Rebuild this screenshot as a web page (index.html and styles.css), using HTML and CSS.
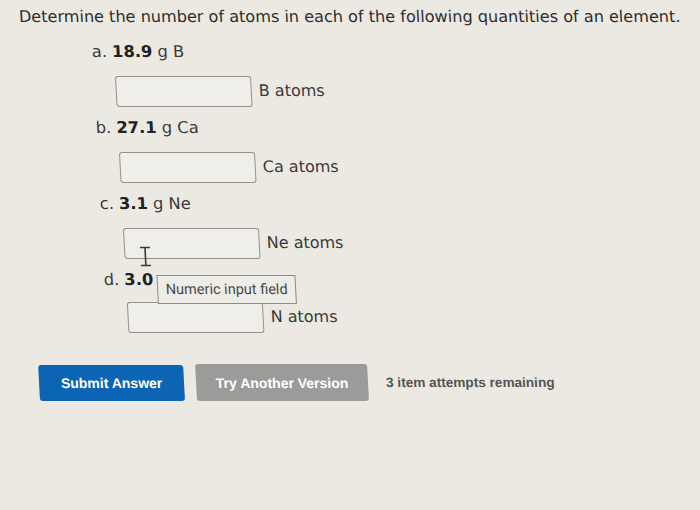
FILE: index.html
```html
<!DOCTYPE html>
<html lang="en">
<head>
<meta charset="utf-8">
<title>Atoms question</title>
<link rel="stylesheet" href="styles.css">
</head>
<body>
<main class="page">
  <p class="prompt">Determine the number of atoms in each of the following quantities of an element.</p>
  <ol class="parts">
    <li class="part">
      <div class="part-label">a. <b>18.9</b> g B</div>
      <div class="answer-row"><span class="field"></span><span class="unit">B atoms</span></div>
    </li>
    <li class="part">
      <div class="part-label">b. <b>27.1</b> g Ca</div>
      <div class="answer-row"><span class="field"></span><span class="unit">Ca atoms</span></div>
    </li>
    <li class="part">
      <div class="part-label">c. <b>3.1</b> g Ne</div>
      <div class="answer-row"><span class="field"></span><span class="unit">Ne atoms</span></div>
      <svg class="ibeam" width="12" height="21" viewBox="0 0 12 21"><path d="M1 1.5h10M6 1.5v18M1 19.5h10" fill="none" stroke="#3a3a3a" stroke-width="1.6"/></svg>
    </li>
    <li class="part part-last">
      <div class="part-label">d. <b>3.0</b></div>
      <div class="answer-row"><span class="field"></span><span class="unit">N atoms</span></div>
      <div class="tooltip">Numeric input field</div>
    </li>
  </ol>
  <div class="actions">
    <button class="btn btn-primary">Submit Answer</button>
    <button class="btn btn-secondary">Try Another Version</button>
    <span class="attempts">3 item attempts remaining</span>
  </div>
</main>
</body>
</html>
```
FILE: styles.css
```css
html, body {
  margin: 0;
  padding: 0;
  background: #ebe9e2;
}
body {
  width: 700px;
  height: 510px;
  overflow: hidden;
  font-family: "DejaVu Sans", Verdana, sans-serif;
  color: #333;
}
.page {
  padding: 7px 0 0 18px;
  transform: skewX(3deg);
  transform-origin: 0 0;
}
.prompt {
  margin: 0;
  font-size: 16.1px;
  line-height: 20px;
  color: #2e2e2e;
}
.parts {
  list-style: none;
  margin: 15px 0 0;
  padding: 0 0 0 71px;
  display: flex;
  flex-direction: column;
  gap: 11px;
}
.part {
  position: relative;
  display: flex;
  flex-direction: column;
  gap: 14px;
}
.part-last {
  gap: 12px;
}
.part-label {
  font-size: 16.3px;
  line-height: 20px;
  color: #3a3a3a;
}
.part-label b {
  color: #222;
}
.answer-row {
  display: flex;
  align-items: center;
  gap: 7px;
  padding-left: 22px;
}
.field {
  width: 136px;
  height: 31px;
  box-sizing: border-box;
  border: 1.5px solid #93918b;
  border-radius: 3px;
  background: #efeee9;
}
.unit {
  font-size: 16px;
  line-height: 20px;
  color: #3a3a3a;
  margin-top: -2px;
}
.tooltip {
  position: absolute;
  left: 53px;
  top: 5px;
  width: 139px;
  height: 29px;
  box-sizing: border-box;
  border: 1px solid #8c8b86;
  background: #edece6;
  font-family: Roboto, "Liberation Sans", sans-serif;
  font-size: 14.5px;
  line-height: 27px;
  text-align: center;
  color: #4a4a4a;
  white-space: nowrap;
}
.ibeam {
  position: absolute;
  left: 37px;
  top: 52px;
}
.actions {
  display: flex;
  align-items: center;
  margin: 31px 0 0 1px;
}
.btn {
  font-family: "Liberation Sans", Arial, sans-serif;
  font-weight: bold;
  font-size: 14px;
  color: #fff;
  border: none;
  border-radius: 3px;
  height: 36px;
  padding: 0;
  margin: 0 12px 0 0;
}
.btn-primary {
  background: #0c64b5;
  width: 145px;
}
.btn-secondary {
  background: #9b9b99;
  width: 172px;
  height: 37px;
}
.attempts {
  margin-left: 6px;
  font-family: "Liberation Sans", Arial, sans-serif;
  font-weight: bold;
  font-size: 13.6px;
  color: #555;
}
```
